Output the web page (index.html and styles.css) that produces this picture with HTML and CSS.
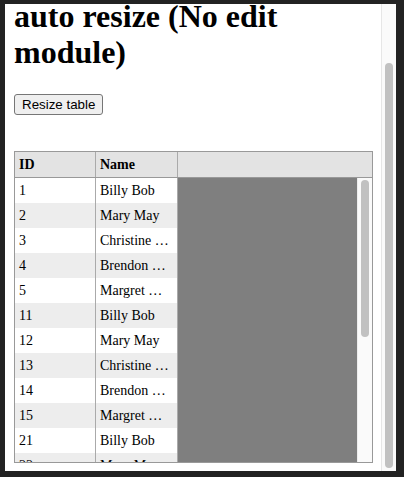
FILE: index.html
```html
<!DOCTYPE html>
<html>
<head>
<meta charset="utf-8">
<link rel="stylesheet" href="styles.css">
</head>
<body>
<div class="frame">
  <div class="window">
    <div class="viewport">
      <div class="page">
        <h1 class="title">auto resize (No edit module)</h1>
        <div class="actions"><button class="btn">Resize table</button></div>
        <div class="table">
          <div class="thead">
            <div class="th c-id">ID</div>
            <div class="th c-name">Name</div>
            <div class="th filler"></div>
          </div>
          <div class="holder">
            <div class="rows">
              <div class="row"><div class="td c-id">1</div><div class="td c-name">Billy Bob</div></div>
              <div class="row even"><div class="td c-id">2</div><div class="td c-name">Mary May</div></div>
              <div class="row"><div class="td c-id">3</div><div class="td c-name">Christine Lobowski</div></div>
              <div class="row even"><div class="td c-id">4</div><div class="td c-name">Brendon Philips</div></div>
              <div class="row"><div class="td c-id">5</div><div class="td c-name">Margret Marmajuke</div></div>
              <div class="row even"><div class="td c-id">11</div><div class="td c-name">Billy Bob</div></div>
              <div class="row"><div class="td c-id">12</div><div class="td c-name">Mary May</div></div>
              <div class="row even"><div class="td c-id">13</div><div class="td c-name">Christine Lobowski</div></div>
              <div class="row"><div class="td c-id">14</div><div class="td c-name">Brendon Philips</div></div>
              <div class="row even"><div class="td c-id">15</div><div class="td c-name">Margret Marmajuke</div></div>
              <div class="row"><div class="td c-id">21</div><div class="td c-name">Billy Bob</div></div>
              <div class="row even"><div class="td c-id">22</div><div class="td c-name">Mary May</div></div>
            </div>
            <div class="vscroll"><div class="vthumb"></div></div>
          </div>
        </div>
      </div>
    </div>
    <div class="pscroll"><div class="pthumb"></div></div>
  </div>
</div>
</body>
</html>
```

FILE: styles.css
```css
html, body {
  margin: 0;
  padding: 0;
  background: #222222;
}

.frame {
  width: 404px;
  height: 477px;
  box-sizing: border-box;
  padding: 4px 8px 6px 5px;
  background: #222222;
}

.window {
  display: flex;
  width: 391px;
  height: 467px;
  background: #ffffff;
  overflow: hidden;
}

.viewport {
  flex: 1;
  overflow: hidden;
  min-width: 0;
}

.page {
  margin-top: -6px;
  padding: 0 8px 0 9px;
  font-family: "Liberation Serif", "Times New Roman", serif;
  color: #000;
}

.title {
  margin: 0 0 24px 0;
  font-size: 32px;
  line-height: 36px;
  font-weight: bold;
}

.actions {
  display: flex;
}

.btn {
  font-family: "Liberation Sans", Arial, sans-serif;
  font-size: 13.33px;
  line-height: 15px;
  height: 21px;
  padding: 1px 7px;
  border: 1px solid #767676;
  border-radius: 3px;
  background: #efefef;
  color: #000;
  margin: 0;
}

.table {
  margin-top: 36px;
  width: 359px;
  box-sizing: border-box;
  border: 1px solid #999999;
  font-size: 14px;
}

.thead {
  display: flex;
  height: 26px;
  box-sizing: border-box;
  background: #e3e3e3;
  border-bottom: 1px solid #999999;
}

.th {
  box-sizing: border-box;
  padding: 4px;
  line-height: 17px;
  font-weight: bold;
  border-right: 1px solid #aaaaaa;
}

.th.filler {
  flex: 1;
  border-right: none;
}

.c-id {
  width: 81px;
  flex: none;
}

.c-name {
  width: 82px;
  flex: none;
}

.holder {
  display: flex;
  height: 284px;
  overflow: hidden;
}

.rows {
  flex: 1;
  background: #7f7f7f;
  overflow: hidden;
}

.row {
  display: flex;
  width: 163px;
  height: 25px;
  background: #ffffff;
}

.row.even {
  background: #ededed;
}

.td {
  box-sizing: border-box;
  padding: 4px;
  line-height: 17px;
  border-right: 1px solid #aaaaaa;
  white-space: nowrap;
  overflow: hidden;
  text-overflow: ellipsis;
}

.vscroll {
  width: 15px;
  flex: none;
  box-sizing: border-box;
  background: #fafafa;
  border-left: 1px solid #ededed;
  padding: 2px 0 0 3px;
}

.vthumb {
  width: 8px;
  height: 157px;
  background: #c1c1c1;
  border-radius: 4px;
}

.pscroll {
  width: 15px;
  flex: none;
  box-sizing: border-box;
  background: #fafafa;
  border-left: 1px solid #e6e6e6;
  padding: 59px 0 0 3px;
}

.pthumb {
  width: 8px;
  height: 405px;
  background: #c1c1c1;
  border-radius: 4px;
}
```
